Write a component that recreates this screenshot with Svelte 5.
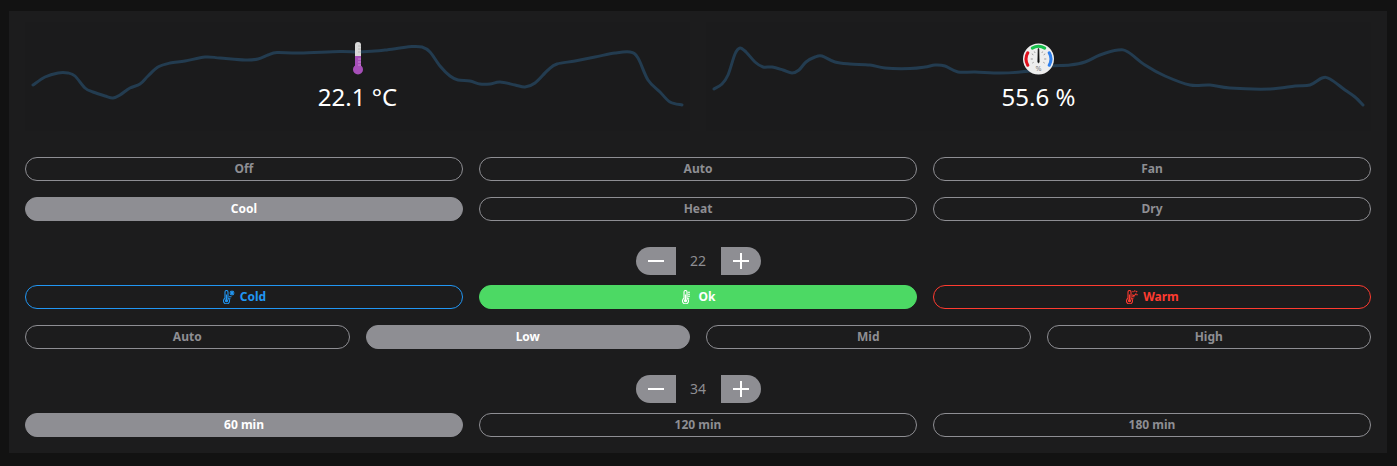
<script>
  const tempPts = [[33,85],[45,77],[58,73],[68,73],[75,76],[85,88],[93,92],[105,96],[113,98],[120,95],[130,88],[140,84],[148,76],[158,67],[170,63],[185,61],[205,57],[220,58],[245,60],[258,59],[268,55],[277,52.5],[300,53],[340,51.5],[358,52],[375,51],[385,50],[400,48],[412,46.5],[422,47],[430,52],[440,66],[450,76],[458,80],[470,81],[480,84],[490,84],[500,82],[515,85],[525,87],[535,83],[548,70],[557,64],[575,61],[595,57],[615,53],[630,52],[638,58],[648,80],[660,92],[670,102],[682,105]];
  const humPts = [[714,89],[722,84],[728,75],[735,54],[740,48],[746,52],[755,62],[763,67],[772,67],[783,70],[792,73],[799,70],[806,62],[815,57],[822,56],[835,62],[850,64],[870,65],[885,68],[910,68.5],[925,67],[935,65],[945,66],[958,72],[975,72],[1000,73],[1020,72],[1035,70],[1050,66],[1070,65],[1085,62],[1100,55],[1118,50],[1128,52],[1145,65],[1165,76],[1190,85],[1210,85],[1230,88],[1270,89],[1295,86],[1310,85],[1322,78],[1330,79],[1345,90],[1355,97],[1363,105]];

  function smooth(pts, ox, oy) {
    const p = pts.map(([x, y]) => [x - ox, y - oy]);
    let d = `M${p[0][0]} ${p[0][1]}`;
    for (let i = 0; i < p.length - 1; i++) {
      const a = p[Math.max(i - 1, 0)], b = p[i], c = p[i + 1], e = p[Math.min(i + 2, p.length - 1)];
      const c1 = [b[0] + (c[0] - a[0]) / 6, b[1] + (c[1] - a[1]) / 6];
      const c2 = [c[0] - (e[0] - b[0]) / 6, c[1] - (e[1] - b[1]) / 6];
      d += `C${c1[0].toFixed(1)} ${c1[1].toFixed(1)} ${c2[0].toFixed(1)} ${c2[1].toFixed(1)} ${c[0]} ${c[1]}`;
    }
    return d;
  }
  const tempPath = smooth(tempPts, 25, 22);
  const humPath = smooth(humPts, 706, 22);

  const modes = [
    [{ t: 'Off' }, { t: 'Auto' }, { t: 'Fan' }],
    [{ t: 'Cool', on: true }, { t: 'Heat' }, { t: 'Dry' }]
  ];
  const fans = [{ t: 'Auto' }, { t: 'Low', on: true }, { t: 'Mid' }, { t: 'High' }];
  const timers = [{ t: '60 min', on: true }, { t: '120 min' }, { t: '180 min' }];
</script>

{#snippet btn(b)}
  <button class="btn" class:on={b.on}>{b.t}</button>
{/snippet}

{#snippet stepper(v)}
  <div class="stepper">
    <span class="step left"><i class="bar"></i></span>
    <span class="val">{v}</span>
    <span class="step right"><i class="bar"></i><i class="bar vert"></i></span>
  </div>
{/snippet}

{#snippet therm(kind)}
  <svg class="mini" viewBox="0 0 13 14" width="13" height="14" fill="none" stroke="currentColor" stroke-width="1.1">
    <path d="M3 2a1.5 1.5 0 0 1 3 0v6.3a3 3 0 1 1-3 0z" />
    <circle cx="4.5" cy="10.7" r="1.6" fill="currentColor" stroke="none" />
    <path d="M4.5 10V4.5" stroke-width="1.2" />
    {#if kind === 'cold'}
      <path d="M7.5 3h5M10 .5v5M8.3 1.2l3.4 3.6M11.7 1.2L8.3 4.8M7 6.8h2.5M7 8.8h1.5" />
    {:else if kind === 'warm'}
      <path d="M7.5 1.2l1 .8M9.8.3v1.4M12.2 1.2l-1.2 1M7.2 4.6a2.2 2.2 0 0 0 3.8-1.4M11.2 4.8h1.6M7 6.8h2.5M7 8.8h1.5" />
    {:else}
      <path d="M6.8 2.2h2.2M6.8 4.2h2.2M6.8 6.2h2.2M6.8 8.2h1.4" />
    {/if}
  </svg>
{/snippet}

<div class="card">
  <div class="charts">
    <div class="chart">
      <svg class="spark" viewBox="0 0 665 109" preserveAspectRatio="none"><path d={tempPath} /></svg>
      <div class="reading">
        <svg class="icon" width="12" height="34" viewBox="0 0 12 34">
          <rect x="3" y="0" width="6" height="25" rx="3" fill="#d9d9d9" />
          <path d="M3 14h6v13H3z" fill="#a64fb8" />
          <circle cx="6" cy="27.5" r="5" fill="#a64fb8" />
          <path d="M6 4h3M6 7h3M6 10h3" stroke="#b8b8b8" stroke-width="1" />
          <path d="M6 17h3M6 20h3M6 23h3" stroke="#c98ad6" stroke-width="1" />
        </svg>
        <div class="value">22.1 °C</div>
      </div>
    </div>
    <div class="chart">
      <svg class="spark" viewBox="0 0 665 109" preserveAspectRatio="none"><path d={humPath} /></svg>
      <div class="reading">
        <svg class="icon" width="31" height="34" viewBox="0 0 30 30">
          <circle cx="15" cy="15" r="15" fill="#eeeeee" />
          <path d="M4.6 21A12 12 0 0 1 4.6 9" stroke="#e0101c" stroke-width="3" fill="none" stroke-linecap="round" />
          <path d="M9 4.4A12 12 0 0 1 21 4.4" stroke="#18c04c" stroke-width="3" fill="none" stroke-linecap="round" />
          <path d="M25.4 9A12 12 0 0 1 25.4 21" stroke="#2f80ed" stroke-width="3" fill="none" stroke-linecap="round" />
          <path d="M14.4 18L14.7 5h.6l.3 13a.6.6 0 0 1-1.2 0z" fill="#111" stroke="#111" stroke-width=".8" />
          <path d="M8.5 10l1.5 1M7.5 15h2M21.5 10l-1.5 1M22.5 15h-2M11 7.8l.7 1.3M19 7.8l-.7 1.3M9 19l1.3-.8M21 19l-1.3-.8" stroke="#777" stroke-width=".7" />
          <text x="15" y="27" text-anchor="middle" font-size="7" fill="#777" font-family="Noto Sans, sans-serif">%</text>
        </svg>
        <div class="value">55.6 %</div>
      </div>
    </div>
  </div>

  <div class="row three first">{#each modes[0] as b}{@render btn(b)}{/each}</div>
  <div class="row three gap16">{#each modes[1] as b}{@render btn(b)}{/each}</div>

  <div class="stepwrap s1">{@render stepper(22)}</div>

  <div class="row three">
    <button class="btn cold">{@render therm('cold')}Cold</button>
    <button class="btn ok">{@render therm('ok')}Ok</button>
    <button class="btn warm">{@render therm('warm')}Warm</button>
  </div>

  <div class="row four gap16">{#each fans as b}{@render btn(b)}{/each}</div>

  <div class="stepwrap s2">{@render stepper(34)}</div>

  <div class="row three">{#each timers as b}{@render btn(b)}{/each}</div>
</div>

<style>
  :global(body) {
    background: #121212;
    font-family: "Noto Sans", sans-serif;
  }
  .card {
    box-sizing: border-box;
    margin: 0 10px 0 9px;
    padding: 11px 16px 16px;
    height: 453px;
    background: #1c1c1d;
    border-top: 11px solid #121212;
    background-clip: padding-box;
  }
  .charts {
    display: grid;
    grid-template-columns: 1fr 1fr;
    gap: 16px;
  }
  .chart {
    position: relative;
    height: 109px;
    background: #1b1b1c;
  }
  .spark {
    position: absolute;
    inset: 0;
    width: 100%;
    height: 100%;
  }
  .spark path {
    fill: none;
    stroke: #233c50;
    stroke-width: 3;
    stroke-linejoin: round;
    stroke-linecap: round;
  }
  .reading {
    position: relative;
    display: flex;
    flex-direction: column;
    align-items: center;
    padding-top: 20px;
  }
  .icon {
    display: block;
    height: 34px;
  }
  .value {
    margin-top: 4px;
    font-size: 24px;
    line-height: 33px;
    color: #fff;
  }
  .row {
    display: grid;
    gap: 16px;
  }
  .three { grid-template-columns: repeat(3, 1fr); }
  .four { grid-template-columns: repeat(4, 1fr); }
  .first { margin-top: 26px; }
  .gap16 { margin-top: 16px; }
  .btn {
    box-sizing: border-box;
    display: flex;
    align-items: center;
    justify-content: center;
    gap: 5px;
    height: 24px;
    padding: 0;
    border: 1px solid #8e8e93;
    border-radius: 12px;
    background: transparent;
    color: #8e8e93;
    font: 700 12px/1 "Noto Sans", sans-serif;
  }
  .btn.on {
    background: #8e8e93;
    color: #fff;
  }
  .btn.cold { border-color: #2196f3; color: #2196f3; }
  .btn.ok { border-color: #4cd964; background: #4cd964; color: #fff; }
  .btn.warm { border-color: #ff3b30; color: #ff3b30; }
  .mini { display: block; }
  .stepwrap { display: flex; justify-content: center; }
  .s1 { margin-top: 26px; margin-bottom: 10px; }
  .s2 { margin-top: 26px; margin-bottom: 10px; }
  .stepper {
    display: flex;
    height: 28px;
    width: 125px;
  }
  .step {
    position: relative;
    width: 40px;
    background: #8e8e93;
  }
  .left { border-radius: 14px 0 0 14px; }
  .right { border-radius: 0 14px 14px 0; }
  .bar {
    position: absolute;
    left: 12px;
    top: 13px;
    width: 16px;
    height: 2px;
    background: #fff;
  }
  .bar.vert {
    left: 19px;
    top: 6px;
    width: 2px;
    height: 16px;
  }
  .val {
    flex: 1;
    text-align: center;
    font-size: 14px;
    line-height: 28px;
    color: #8e8e93;
  }
</style>
